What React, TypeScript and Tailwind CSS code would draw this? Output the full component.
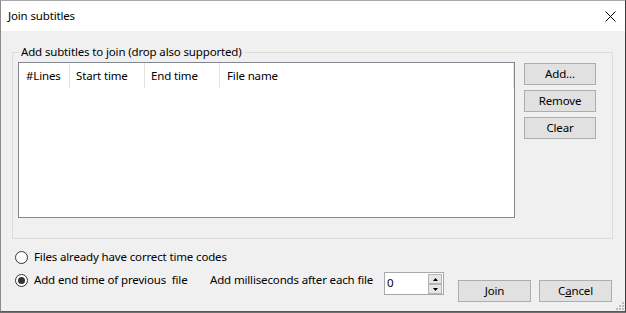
import React from "react";

const font = { fontFamily: '"Segoe UI", "Noto Sans", "Open Sans", sans-serif' };

function Btn({ children, className = "" }: { children: React.ReactNode; className?: string }) {
  return (
    <div
      className={
        "h-[22px] flex items-center justify-center bg-[#e1e1e1] border border-[#adadad] text-[11.5px] text-black " +
        className
      }
    >
      {children}
    </div>
  );
}

function Radio({ checked, label, className = "" }: { checked?: boolean; label: string; className?: string }) {
  return (
    <div className={"h-[20px] flex items-center gap-[6px] " + className}>
      <div className="w-[13px] h-[13px] rounded-full border border-[#333333] bg-white flex items-center justify-center shrink-0">
        {checked && <div className="w-[7px] h-[7px] rounded-full bg-[#333333]" />}
      </div>
      <span className="text-[11.5px] text-black whitespace-pre leading-[20px]">{label}</span>
    </div>
  );
}

export default function App() {
  return (
    <div className="w-[626px] h-[313px] bg-[#707070] tracking-[-0.15px]" style={font}>
      <div className="relative w-[626px] h-[312px] flex flex-col bg-[#f0f0f0] border-t border-t-[#a8a8a8] border-l border-l-[#8c8c8c] border-r border-r-[#3a3a3a] border-b border-b-[#5a5a5a]">
        {/* Title bar */}
        <div className="h-[30px] bg-white flex items-center justify-between pl-[7px] pr-[9px]">
          <span className="text-[11.5px] text-black">Join subtitles</span>
          <svg width="11" height="11" viewBox="0 0 11 11" className="block">
            <path d="M0.5 0.5 L10.5 10.5 M10.5 0.5 L0.5 10.5" stroke="#000" strokeWidth="1" />
          </svg>
        </div>

        {/* Body */}
        <div className="flex-1 flex flex-col px-[11px]">
          {/* Group box */}
          <div className="relative mt-[21px] w-[601px] h-[187px] border border-[#dcdcdc] pt-[9px] pl-[5px] flex">
            <span className="absolute left-[6px] top-[-9px] px-[2px] bg-[#f0f0f0] text-[11.5px] leading-[16px] text-black whitespace-nowrap">
              Add subtitles to join (drop also supported)
            </span>
            <div className="w-[497px] h-[156px] border border-[#828790] bg-white flex flex-col">
              <div className="h-[25px] flex text-[11.5px] text-black">
                <div className="w-[51px] border-r border-[#e5e5e5] flex items-center pl-[7px]">#Lines</div>
                <div className="w-[75px] border-r border-[#e5e5e5] flex items-center pl-[6px]">Start time</div>
                <div className="w-[75px] border-r border-[#e5e5e5] flex items-center pl-[6px]">End time</div>
                <div className="flex-1 border-r border-[#e5e5e5] flex items-center pl-[7px]">File name</div>
              </div>
            </div>
            <div className="ml-[9px] mt-[1px] w-[72px] flex flex-col gap-[5px]">
              <Btn>Add...</Btn>
              <Btn>Remove</Btn>
              <Btn>Clear</Btn>
            </div>
          </div>

          {/* Radios */}
          <Radio label="Files already have correct time codes" className="mt-[8px] pl-[3px]" />
          <div className="mt-[3px] pl-[3px] flex items-start">
            <Radio checked label="Add end time of previous  file" className="w-[195px]" />
            <span className="w-[174px] h-[20px] leading-[20px] text-[11.5px] text-black whitespace-nowrap">
              Add milliseconds after each file
            </span>
            <div className="mt-[2px] w-[60px] h-[23px] border border-[#a8a8a8] bg-white flex">
              <span className="flex-1 pl-[2px] text-[11.5px] leading-[20px] text-black">0</span>
              <div className="w-[14px] mt-[1px] mr-[1px] flex flex-col">
                <div className="h-[10px] bg-[#e6e6e6] border border-[#b5b5b5] flex items-center justify-center">
                  <svg width="5" height="3" viewBox="0 0 5 3" className="block">
                    <path d="M2.5 0 L5 3 L0 3 Z" fill="#000" />
                  </svg>
                </div>
                <div className="h-[10px] bg-[#e6e6e6] border border-[#b5b5b5] flex items-center justify-center">
                  <svg width="5" height="3" viewBox="0 0 5 3" className="block">
                    <path d="M0 0 L5 0 L2.5 3 Z" fill="#000" />
                  </svg>
                </div>
              </div>
            </div>
            <Btn className="mt-[10px] ml-[14px] w-[73px]">Join</Btn>
            <Btn className="mt-[10px] ml-[8px] w-[73px]">
              <span>
                C<span className="underline underline-offset-1">a</span>ncel
              </span>
            </Btn>
          </div>
        </div>

        {/* Size grip */}
        <svg width="8" height="8" viewBox="0 0 8 8" className="absolute right-[1px] bottom-[1px] block">
          <rect x="6" y="0" width="2" height="2" fill="#bcbcbc" />
          <rect x="3" y="3" width="2" height="2" fill="#bcbcbc" />
          <rect x="6" y="3" width="2" height="2" fill="#bcbcbc" />
          <rect x="0" y="6" width="2" height="2" fill="#bcbcbc" />
          <rect x="3" y="6" width="2" height="2" fill="#bcbcbc" />
          <rect x="6" y="6" width="2" height="2" fill="#bcbcbc" />
        </svg>
      </div>
    </div>
  );
}
